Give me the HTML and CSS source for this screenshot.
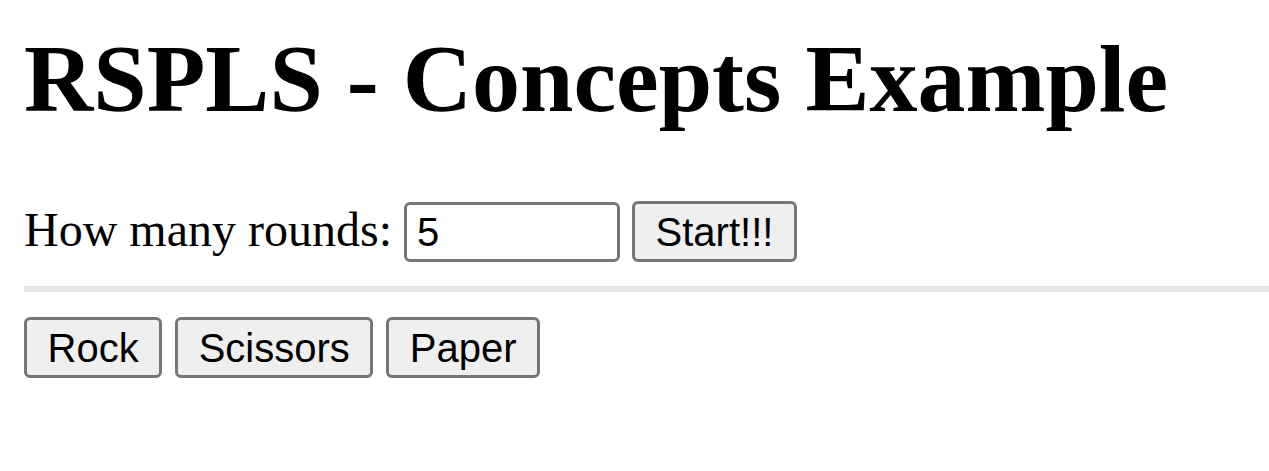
FILE: index.html
```html
<!DOCTYPE html>
<html>
<head>
<meta charset="utf-8">
<link rel="stylesheet" href="styles.css">
</head>
<body>
<h1 class="title">RSPLS - Concepts Example</h1>
<div class="setup">How many rounds: <input class="rounds" type="text" value="5"> <button class="btn start">Start!!!</button></div>
<hr class="divider">
<div class="moves">
  <button class="btn">Rock</button>
  <button class="btn">Scissors</button>
  <button class="btn">Paper</button>
</div>
</body>
</html>
```
FILE: styles.css
```css
html, body {
  margin: 0;
  background: #fff;
  overflow: hidden;
}
body {
  padding: 24px;
  font-family: "Liberation Serif", "Times New Roman", serif;
  font-size: 48px;
  color: #000;
}
.title {
  margin: 0 0 67px 0;
  font-size: 96px;
  font-weight: bold;
  line-height: 110px;
}
.setup {
  line-height: normal;
}
.rounds {
  box-sizing: border-box;
  width: 216px;
  height: 60px;
  margin: 0;
  padding: 0 10px;
  border: 3px solid #767676;
  border-radius: 6px;
  font-family: "Liberation Sans", Arial, sans-serif;
  font-size: 40px;
  color: #000;
  background: #fff;
  outline: none;
  vertical-align: baseline;
}
.btn {
  box-sizing: border-box;
  height: 61px;
  margin: 0;
  padding: 0 20.5px;
  border: 3px solid #767676;
  border-radius: 6px;
  background: #efefef;
  font-family: "Liberation Sans", Arial, sans-serif;
  font-size: 40px;
  color: #000;
  line-height: 46px;
}
.start {
  width: 165px;
  padding: 0;
}
.divider {
  height: 6px;
  margin: 24px -24px 24px 0;
  border: 0;
  background: #e3e5e8;
}
.moves {
  display: flex;
  gap: 13px;
  margin-top: 25px;
}
```
